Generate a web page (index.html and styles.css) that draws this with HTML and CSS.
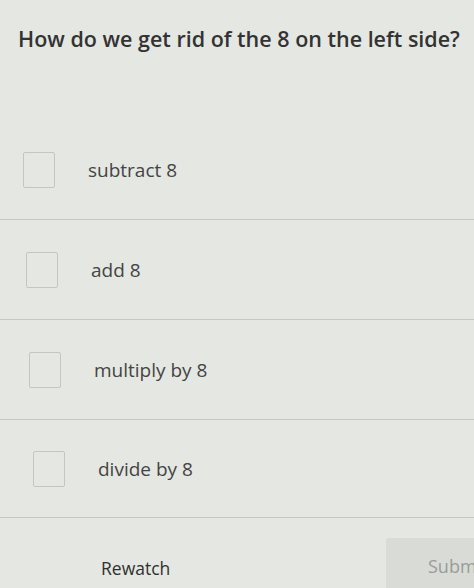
FILE: index.html
```html
<!DOCTYPE html>
<html>
<head>
<meta charset="utf-8">
<link rel="stylesheet" href="styles.css">
</head>
<body>
<div class="page">
  <h1 class="question">How do we get rid of the 8 on the left side?</h1>
  <ul class="options">
    <li class="option"><span class="box"></span><span class="label">subtract 8</span></li>
    <li class="option"><span class="box"></span><span class="label">add 8</span></li>
    <li class="option"><span class="box"></span><span class="label">multiply by 8</span></li>
    <li class="option"><span class="box"></span><span class="label">divide by 8</span></li>
  </ul>
  <div class="actions">
    <span class="rewatch">Rewatch</span>
    <span class="submit">Submit</span>
  </div>
</div>
</body>
</html>
```
FILE: styles.css
```css
html, body {
  margin: 0;
  padding: 0;
  background: #e5e7e2;
  overflow: hidden;
}
.page {
  width: 474px;
  height: 588px;
  font-family: "Open Sans", "Liberation Sans", sans-serif;
  color: #3a3b3a;
}
.question {
  margin: 0;
  padding: 24px 0 0 18px;
  height: 96px;
  box-sizing: border-box;
  font-size: 21.5px;
  font-weight: 600;
  white-space: nowrap;
  color: #333;
}
.options {
  list-style: none;
  margin: 0;
  padding: 0;
}
.option {
  display: flex;
  align-items: center;
  height: 100px;
  border-bottom: 1.5px solid #c6c8c3;
  box-sizing: border-box;
  padding-left: 23px;
}
.option:first-child {
  height: 124px;
  padding-top: 24px;
}
.option:nth-child(2) { padding-left: 26px; }
.option:nth-child(3) { padding-left: 29px; }
.option:nth-child(4) { padding-left: 33px; height: 98px; }
.box {
  width: 32px;
  height: 36px;
  border: 1px solid #c4c6c2;
  border-radius: 2px;
  box-sizing: border-box;
  flex: none;
}
.label {
  margin-left: 33px;
  font-size: 19px;
  color: #444;
}
.actions {
  display: flex;
  align-items: flex-end;
  height: 70px;
}
.rewatch {
  margin-left: 101px;
  margin-bottom: 8px;
  font-size: 17.5px;
  font-weight: 500;
  color: #2f302f;
}
.submit {
  margin-left: auto;
  width: 88px;
  height: 50px;
  box-sizing: border-box;
  background: #d9dbd7;
  border-radius: 3px 0 0 0;
  padding: 16px 0 0 42px;
  font-size: 18px;
  color: #9a9b99;
  white-space: nowrap;
  overflow: hidden;
}
```
